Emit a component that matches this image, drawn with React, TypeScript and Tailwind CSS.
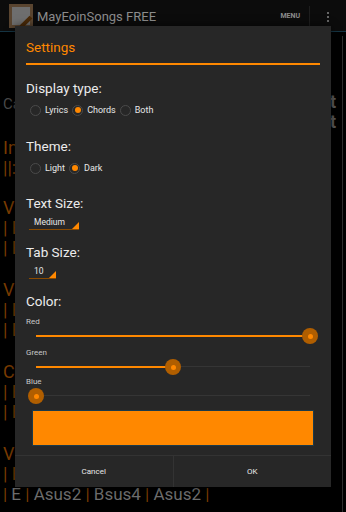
import React from 'react'

const bgLines = [
  { t: 'Ca', c: 'text-[#4a4a4a] text-[15px]', h: 'h-[22px]' },
  { t: '', c: '', h: 'h-[22px]' },
  { t: 'In', c: 'text-[#7a3c00]', h: 'h-[20px]' },
  { t: '||:', c: 'text-[#7a3c00]', h: 'h-[20px]' },
  { t: '', c: '', h: 'h-[20px]' },
  { t: 'V', c: 'text-[#7a3c00]', h: 'h-[20px]' },
  { t: '| E', c: 'text-[#7a3c00]', h: 'h-[20px]' },
  { t: '| E', c: 'text-[#7a3c00]', h: 'h-[20px]' },
  { t: '', c: '', h: 'h-[22px]' },
  { t: 'V', c: 'text-[#7a3c00]', h: 'h-[20px]' },
  { t: '| E', c: 'text-[#7a3c00]', h: 'h-[20px]' },
  { t: '| E', c: 'text-[#7a3c00]', h: 'h-[20px]' },
  { t: '', c: '', h: 'h-[22px]' },
  { t: 'C', c: 'text-[#7a3c00]', h: 'h-[20px]' },
  { t: '| E', c: 'text-[#7a3c00]', h: 'h-[20px]' },
  { t: '| E', c: 'text-[#7a3c00]', h: 'h-[20px]' },
  { t: '', c: '', h: 'h-[22px]' },
  { t: 'V', c: 'text-[#7a3c00]', h: 'h-[20px]' },
  { t: '| E', c: 'text-[#7a3c00]', h: 'h-[20px]' },
]

function Radio({ label, checked }: { label: string; checked?: boolean }) {
  return (
    <div className="flex items-center gap-[4px]">
      <div className="flex h-[11px] w-[11px] items-center justify-center rounded-full border border-[#4a4a4a]">
        {checked && <div className="h-[6px] w-[6px] rounded-full bg-[#ff8800]" />}
      </div>
      <span className="text-[9px] leading-[12px] text-[#e8e8e8]">{label}</span>
    </div>
  )
}

function Spinner({ value, width }: { value: string; width: string }) {
  return (
    <div className={`relative ml-[3px] mt-[4px] h-[14px] border-b border-[#8a4a00] ${width}`}>
      <span className="absolute left-[5px] top-0 text-[8.5px] text-[#e8e8e8]">{value}</span>
      <div className="absolute bottom-0 right-0 h-0 w-0 border-b-[7px] border-l-[7px] border-b-[#ff8800] border-l-transparent" />
    </div>
  )
}

function Slider({ label, pct, mt }: { label: string; pct: number; mt: string }) {
  return (
    <div className={mt}>
      <div className="h-[12px] text-[8px] leading-[12px] text-[#c8c8c8]">{label}</div>
      <div className="relative ml-[10px] mr-[10px] h-[16px]">
        <div className="absolute left-0 right-0 top-[7px] h-[1px] bg-[#353535]" />
        <div className="absolute left-0 top-[7px] h-[2px] bg-[#ff8800]" style={{ width: `${pct}%` }} />
        <div
          className="absolute top-0 flex h-[16px] w-[16px] -translate-x-1/2 items-center justify-center rounded-full bg-[#b05e00]"
          style={{ left: `${pct}%` }}
        >
          <div className="h-[5px] w-[5px] rounded-full bg-[#ff8800]" />
        </div>
      </div>
    </div>
  )
}

export default function App() {
  return (
    <div className="relative h-[512px] w-[346px] overflow-hidden bg-black font-['Roboto',sans-serif]">
      {/* action bar */}
      <div className="flex h-[32px] items-center border-b border-[#153443] bg-[#0c0c0c] pl-[9px]">
        <div className="relative h-[24px] w-[24px] overflow-hidden bg-[#5a4530]">
          <div className="absolute left-[3px] top-[3px] h-[18px] w-[18px] bg-[#6e6e6e]" />
          <div className="absolute left-[10px] top-[16px] h-[4px] w-[14px] -rotate-45 bg-[#4a2a08]" />
        </div>
        <span className="ml-[4px] mt-[2px] text-[13px] text-[#8c8c8c]">MayEoinSongs FREE</span>
        <span className="ml-auto mt-[2px] text-[7px] font-bold text-[#8c8c8c]">MENU</span>
        <div className="ml-[9px] h-[20px] w-px bg-[#1e1e1e]" />
        <div className="ml-[17px] mr-[17px] mt-[2px] flex flex-col gap-[2px]">
          <div className="h-[2px] w-[2px] bg-[#666]" />
          <div className="h-[2px] w-[2px] bg-[#666]" />
          <div className="h-[2px] w-[2px] bg-[#666]" />
        </div>
      </div>

      {/* song content behind */}
      <div className="pl-[3px] pt-[62px] text-[18px] leading-[20px]">
        {bgLines.map((l, i) => (
          <div key={i} className={`${l.h} ${l.c}`}>{l.t}</div>
        ))}
        <div className="text-[17px] text-[#6e6e6e]">
          <span className="text-[#7a3c00]">|</span> E <span className="text-[#7a3c00]">|</span> Asus2{' '}
          <span className="text-[#7a3c00]">|</span> Bsus4 <span className="text-[#7a3c00]">|</span> Asus2{' '}
          <span className="text-[#7a3c00]">|</span>
        </div>
      </div>
      <div className="absolute right-[3px] top-[36px] h-[476px] w-px bg-[#2e2e2e]" />
      <div className="absolute right-[10px] top-[92px] text-[18px] font-bold leading-[20px] text-[#5a5a5a]">tt<br />tt</div>

      {/* dialog */}
      <div className="absolute left-[15px] top-[26px] flex h-[461px] w-[316px] flex-col bg-[#272727] shadow-[0_0_8px_rgba(0,0,0,0.6)]">
        <div className="px-[11px] pt-[12px]">
          <div className="text-[13.5px] leading-[18px] text-[#ff8800]">Settings</div>
          <div className="mt-[7px] h-[2px] bg-[#ff8800]" />
        </div>
        <div className="flex-1 px-[11px] pt-[14px] text-[#ececec]">
          <div className="text-[13.5px] leading-[18px]">Display type:</div>
          <div className="mt-[7px] flex items-center gap-[4px] pl-[4px]">
            <Radio label="Lyrics" />
            <Radio label="Chords" checked />
            <Radio label="Both" />
          </div>
          <div className="mt-[21px] text-[13.5px] leading-[18px]">Theme:</div>
          <div className="mt-[7px] flex items-center gap-[4px] pl-[4px]">
            <Radio label="Light" />
            <Radio label="Dark" checked />
          </div>
          <div className="mt-[20px] text-[13.5px] leading-[18px]">Text Size:</div>
          <Spinner value="Medium" width="w-[50px]" />
          <div className="mt-[13px] text-[13.5px] leading-[18px]">Tab Size:</div>
          <Spinner value="10" width="w-[27px]" />
          <div className="mt-[13px] text-[13.5px] leading-[18px]">Color:</div>
          <Slider label="Red" pct={100} mt="mt-[6px]" />
          <Slider label="Green" pct={50} mt="mt-[3px]" />
          <Slider label="Blue" pct={0} mt="mt-[1px]" />
          <div className="mx-[6px] mt-[6px] h-[36px] border border-[#1a3a4a] bg-[#ff8800]" />
        </div>
        <div className="flex h-[32px] border-t border-[#333]">
          <div className="flex flex-1 items-center justify-center border-r border-[#333] text-[8px] text-[#e8e8e8]">Cancel</div>
          <div className="flex flex-1 items-center justify-center text-[8px] text-[#e8e8e8]">OK</div>
        </div>
      </div>
    </div>
  )
}
